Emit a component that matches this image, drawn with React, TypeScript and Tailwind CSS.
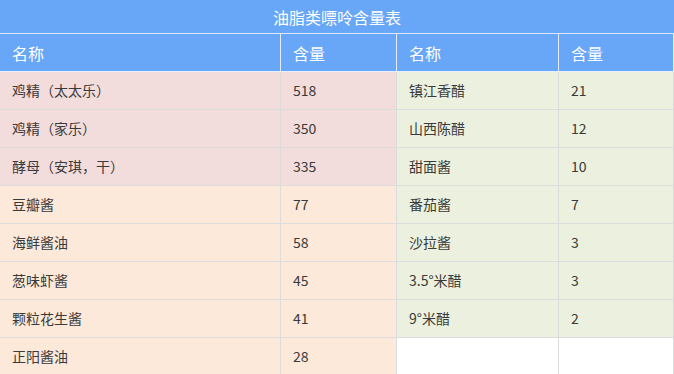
import React from 'react';

interface ROW {
  name: string;
  value: string;
  bg: string;
}

const left: ROW[] = [
  { name: '鸡精（太太乐）', value: '518', bg: 'bg-[#f2dcdc]' },
  { name: '鸡精（家乐）', value: '350', bg: 'bg-[#f2dcdc]' },
  { name: '酵母（安琪，干）', value: '335', bg: 'bg-[#f2dcdc]' },
  { name: '豆瓣酱', value: '77', bg: 'bg-[#fde9da]' },
  { name: '海鲜酱油', value: '58', bg: 'bg-[#fde9da]' },
  { name: '葱味虾酱', value: '45', bg: 'bg-[#fde9da]' },
  { name: '颗粒花生酱', value: '41', bg: 'bg-[#fde9da]' },
  { name: '正阳酱油', value: '28', bg: 'bg-[#fde9da]' },
];

const right: ROW[] = [
  { name: '镇江香醋', value: '21', bg: 'bg-[#ebf1de]' },
  { name: '山西陈醋', value: '12', bg: 'bg-[#ebf1de]' },
  { name: '甜面酱', value: '10', bg: 'bg-[#ebf1de]' },
  { name: '番茄酱', value: '7', bg: 'bg-[#ebf1de]' },
  { name: '沙拉酱', value: '3', bg: 'bg-[#ebf1de]' },
  { name: '3.5°米醋', value: '3', bg: 'bg-[#ebf1de]' },
  { name: '9°米醋', value: '2', bg: 'bg-[#ebf1de]' },
  { name: '', value: '', bg: 'bg-white' },
];

const cell = 'h-[38px] flex items-center border-b border-r border-[#dcdcdc] pl-3 text-[14px] text-[#3a3a3a]';
const head = 'h-[38px] flex items-center border-b border-r border-[#e4eefc] pl-3 text-[16px] text-white bg-[#68a6f7]';

const App: React.FC = () => {
  return (
    <div className="w-[674px] h-[374px] overflow-hidden bg-white" style={{ fontFamily: '"Microsoft YaHei", "Noto Sans CJK SC", sans-serif' }}>
      <div className="h-[34px] flex items-center justify-center bg-[#68a6f7] text-white text-[16px] border-b border-[#dce9fb]">
        油脂类嘌呤含量表
      </div>
      <div className="grid grid-cols-[281px_116px_162px_115px]">
        <div className={head}>名称</div>
        <div className={head}>含量</div>
        <div className={head}>名称</div>
        <div className={head}>含量</div>
        {left.map((row, index) => (
          <React.Fragment key={index}>
            <div className={`${cell} ${row.bg}`}>{row.name}</div>
            <div className={`${cell} ${row.bg}`}>{row.value}</div>
            <div className={`${cell} ${right[index].bg}`}>{right[index].name}</div>
            <div className={`${cell} ${right[index].bg}`}>{right[index].value}</div>
          </React.Fragment>
        ))}
      </div>
    </div>
  );
};

export default App;
